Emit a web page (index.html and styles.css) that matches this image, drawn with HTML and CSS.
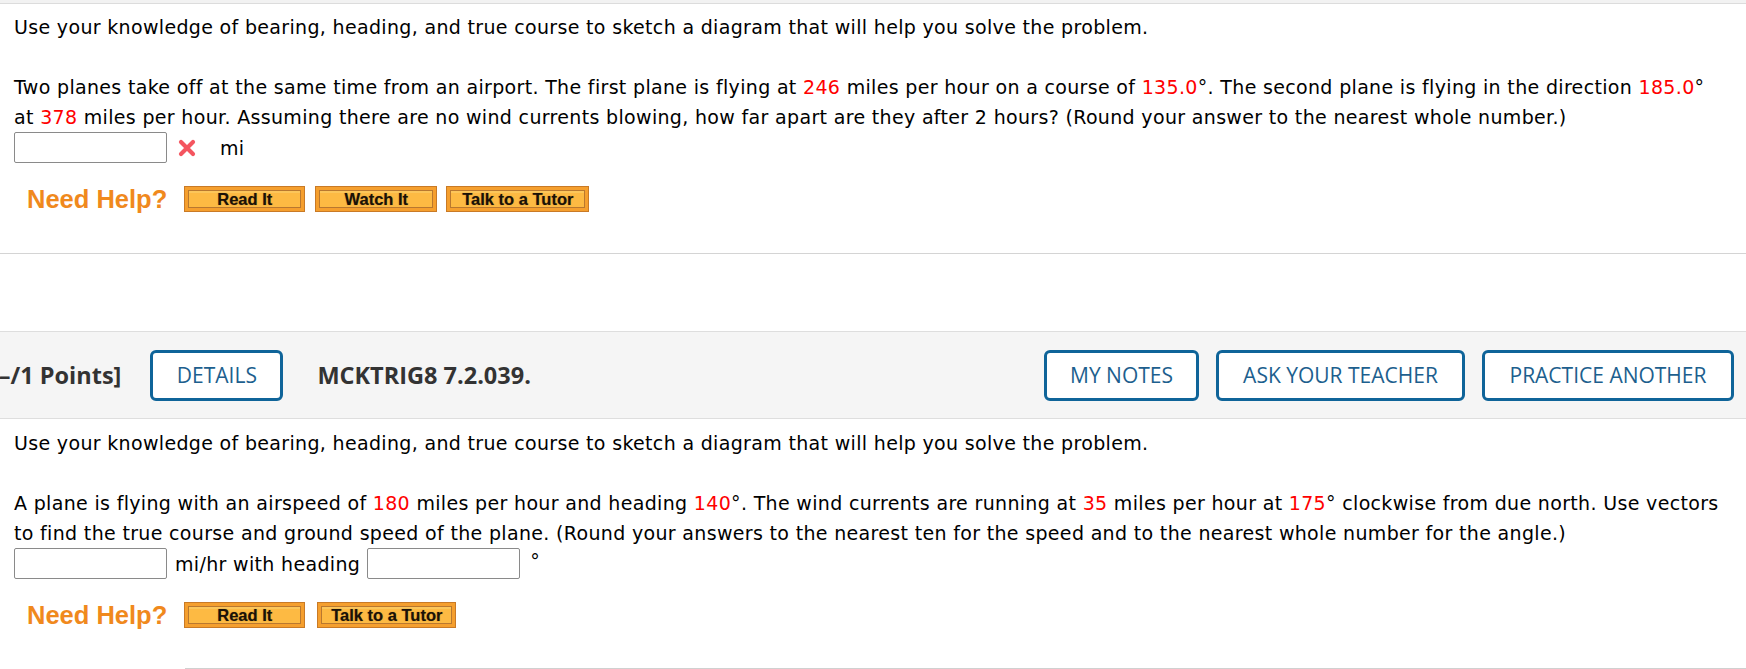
FILE: index.html
```html
<!DOCTYPE html>
<html>
<head>
<meta charset="utf-8">
<link rel="stylesheet" href="styles.css">
</head>
<body>
<div class="topbar"></div>
<div class="question q1">
  <p class="txt">Use your knowledge of bearing, heading, and true course to sketch a diagram that will help you solve the problem.</p>
  <p class="txt gap">Two planes take off at the same time from an airport. The first plane is flying at <span class="red">246</span> miles per hour on a course of <span class="red">135.0</span>°. The second plane is flying in the direction <span class="red">185.0</span>° at <span class="red">378</span> miles per hour. Assuming there are no wind currents blowing, how far apart are they after 2 hours? (Round your answer to the nearest whole number.)</p>
  <div class="answer">
    <input class="box" type="text">
    <svg class="wrong" width="20" height="20" viewBox="0 0 20 20"><path d="M4 4 L16 16 M16 4 L4 16" stroke="#f4555f" stroke-width="4.2" stroke-linecap="round" fill="none"/></svg>
    <span class="unit">mi</span>
  </div>
  <div class="help">
    <span class="need">Need Help?</span>
    <span class="hbtn w-read">Read It</span>
    <span class="hbtn w-watch">Watch It</span>
    <span class="hbtn w-tutor">Talk to a Tutor</span>
  </div>
</div>
<div class="sep"></div>
<div class="header">
  <span class="points">[–/1 Points]</span>
  <span class="obtn details">DETAILS</span>
  <span class="code">MCKTRIG8 7.2.039.</span>
  <span class="spacer"></span>
  <span class="obtn notes">MY NOTES</span>
  <span class="obtn ask">ASK YOUR TEACHER</span>
  <span class="obtn practice">PRACTICE ANOTHER</span>
</div>
<div class="question q2">
  <p class="txt">Use your knowledge of bearing, heading, and true course to sketch a diagram that will help you solve the problem.</p>
  <p class="txt gap">A plane is flying with an airspeed of <span class="red">180</span> miles per hour and heading <span class="red">140</span>°. The wind currents are running at <span class="red">35</span> miles per hour at <span class="red">175</span>° clockwise from due north. Use vectors to find the true course and ground speed of the plane. (Round your answers to the nearest ten for the speed and to the nearest whole number for the angle.)</p>
  <div class="answer">
    <input class="box" type="text">
    <span class="mid">mi/hr with heading</span>
    <input class="box" type="text">
    <span class="deg">°</span>
  </div>
  <div class="help">
    <span class="need">Need Help?</span>
    <span class="hbtn w-read">Read It</span>
    <span class="hbtn w-tutor2">Talk to a Tutor</span>
  </div>
</div>
<div class="bottomline"></div>
</body>
</html>
```
FILE: styles.css
```css
html, body {
  margin: 0;
  padding: 0;
  background: #fff;
  overflow: hidden;
}
body {
  width: 1746px;
  font-family: "DejaVu Sans", Verdana, sans-serif;
  color: #000;
}
.topbar {
  height: 3px;
  background: #f2f2f2;
  border-bottom: 1px solid #dcdcdc;
}
.question {
  padding-left: 14px;
  padding-right: 18px;
}
.q1 {
  padding-top: 8px;
}
.q2 {
  padding-top: 9px;
}
.txt {
  margin: 0;
  font-size: 19px;
  letter-spacing: 0.33px;
  line-height: 30px;
}
.txt.gap {
  margin-top: 30px;
}
.red {
  color: #ff0000;
}
.answer {
  display: flex;
  align-items: center;
  height: 31px;
  font-size: 19px;
  letter-spacing: 0.33px;
}
.box {
  box-sizing: border-box;
  width: 153px;
  height: 31px;
  margin: 0;
  border: 1px solid #8a8a8a;
  border-radius: 2px;
  background: #fff;
}
.wrong {
  margin-left: 10px;
  filter: blur(0.4px);
}
.unit {
  margin-left: 23px;
}
.mid {
  margin: 0 7px 0 8px;
}
.deg {
  margin-left: 10px;
  align-self: flex-start;
  line-height: 26px;
}
.help {
  display: flex;
  align-items: center;
  margin-top: 23px;
  height: 26px;
}
.need {
  font-family: "Liberation Sans", Arial, sans-serif;
  font-weight: bold;
  font-size: 25.5px;
  color: #f0891d;
  margin-left: 13px;
  margin-right: 17px;
}
.hbtn {
  box-sizing: border-box;
  height: 26px;
  display: flex;
  align-items: center;
  justify-content: center;
  font-family: "Liberation Sans", Arial, sans-serif;
  font-weight: bold;
  font-size: 16.5px;
  color: #1a1208;
  text-shadow: 0 0 1px rgba(60, 30, 0, 0.5);
  background: #fdba43;
  border: 1px solid #c97a26;
  box-shadow: inset 0 0 0 3px #f59f2e, inset 0 0 0 4px #b9782f, inset 0 2px 0 4px #fcc65a;
  margin-right: 9px;
}
.w-read { width: 121px; }
.w-watch { width: 122px; margin-left: 1px; }
.w-tutor { width: 143px; }
.w-tutor2 { width: 139px; margin-left: 3px; }
.sep {
  margin-top: 41px;
  border-top: 1px solid #d4d4d4;
  height: 77px;
}
.header {
  box-sizing: border-box;
  height: 88px;
  background: #f5f5f5;
  border-top: 1px solid #dedede;
  border-bottom: 1px solid #dedede;
  display: flex;
  align-items: center;
  padding-right: 12px;
  font-family: "Open Sans", sans-serif;
  color: #333;
}
.points {
  font-weight: bold;
  font-size: 23.5px;
  margin-left: -9px;
  margin-right: 29px;
}
.code {
  font-weight: bold;
  font-size: 23.5px;
  margin-left: 34px;
}
.spacer {
  flex: 1;
}
.obtn {
  box-sizing: border-box;
  height: 51px;
  display: flex;
  align-items: center;
  justify-content: center;
  border: 3px solid #0f6499;
  border-radius: 6px;
  color: #1d5f8e;
  font-size: 21px;
  background: #fff;
}
.details { width: 133px; }
.notes { width: 155px; margin-right: 17px; }
.ask { width: 249px; margin-right: 17px; }
.practice { width: 252px; }
.bottomline {
  margin-top: 40px;
  margin-left: 185px;
  border-top: 2px solid #d0d0d0;
}
```
